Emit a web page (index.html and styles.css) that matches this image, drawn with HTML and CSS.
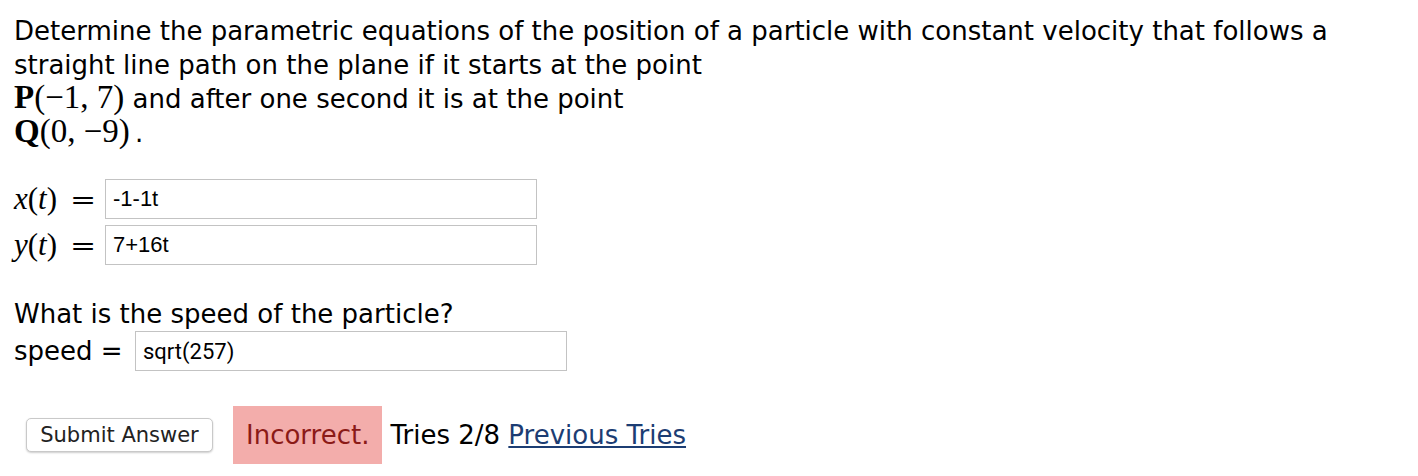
FILE: index.html
```html
<html>
<head>
<meta charset="utf-8">
<link rel="stylesheet" href="styles.css">
</head>
<body>
<div class="problem">
  <p class="prompt">Determine the parametric equations of the position of a particle with constant velocity that follows a straight line path on the plane if it starts at the point<br>
  <span class="math"><b>P</b>(&minus;1, 7)</span> and after one second it is at the point<br>
  <span class="math"><b>Q</b>(0, &minus;9)</span>&thinsp;.</p>

  <div class="eqrows">
    <div class="eqrow">
      <span class="math lhs"><i>x</i>(<i>t</i>)<span class="eq">=</span></span>
      <input class="answer" value="-1-1t">
    </div>
    <div class="eqrow">
      <span class="math lhs"><i>y</i>(<i>t</i>)<span class="eq">=</span></span>
      <input class="answer" value="7+16t">
    </div>
  </div>

  <p class="prompt q2">What is the speed of the particle?</p>
  <div class="eqrow">
    <span class="lbl">speed =</span>
    <input class="answer alt" value="sqrt(257)">
  </div>

  <div class="submitrow">
    <button class="submit">Submit Answer</button>
    <span class="incorrect">Incorrect.</span>
    <span class="tries">Tries 2/8 <a href="#">Previous Tries</a></span>
  </div>
</div>
</body>
</html>
```

FILE: styles.css
```css
body
{
margin: 8px;
background: #ffffff;
color: #000000;
}
.problem
{
padding-left: 6px;
font-family: "DejaVu Sans", Verdana, sans-serif;
font-size: 26px;
}
.prompt
{
margin: 0;
padding-top: 6px;
line-height: 34px;
}
.math
{
font-family: "Liberation Serif", "Times New Roman", serif;
font-size: 33px;
line-height: 20px;
}
.lhs
{
width: 91px;
flex-shrink: 0;
font-size: 31px;
white-space: nowrap;
}
.eq
{
font-family: "DejaVu Serif", serif;
font-size: 26px;
margin-left: 13px;
display: inline-block;
transform: scaleX(1.2);
transform-origin: left center;
}
.eqrows
{
margin-top: 29px;
display: flex;
flex-direction: column;
gap: 6px;
}
.eqrow
{
display: flex;
align-items: center;
}
.lbl
{
width: 121px;
}
.answer
{
width: 432px;
height: 40px;
box-sizing: border-box;
border: 1px solid #c3c3c3;
padding: 2px 7px;
font-family: "Liberation Sans", Arial, sans-serif;
font-size: 22px;
outline: none;
}
.alt
{
font-family: Roboto, "Liberation Sans", sans-serif;
}
.q2
{
padding-top: 32px;
}
.submitrow
{
margin-top: 35px;
display: flex;
align-items: center;
}
.submit
{
margin-left: 12px;
width: 187px;
height: 34px;
font-family: "DejaVu Sans", Verdana, sans-serif;
font-size: 21px;
color: #222222;
background: #ffffff;
border: 1px solid #c9c9c9;
border-radius: 5px;
box-shadow: 0 1px 2px rgba(0,0,0,0.2);
}
.incorrect
{
margin-left: 20px;
padding: 0 13px;
height: 58px;
line-height: 58px;
background: #f3adab;
color: #8b1a17;
}
.tries
{
margin-left: 8px;
}
.tries a
{
color: #1c3d73;
}
```
